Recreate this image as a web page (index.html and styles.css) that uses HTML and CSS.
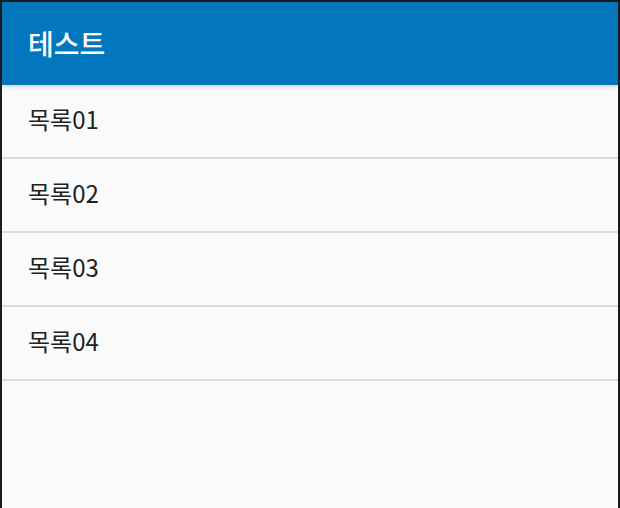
FILE: index.html
```html
<!DOCTYPE html>
<html lang="ko">
<head>
<meta charset="utf-8">
<link rel="stylesheet" href="styles.css">
</head>
<body>
<div class="frame">
  <header class="appbar"><h1 class="title">테스트</h1></header>
  <ul class="list">
    <li class="item">목록01</li>
    <li class="item">목록02</li>
    <li class="item">목록03</li>
    <li class="item">목록04</li>
  </ul>
</div>
</body>
</html>
```
FILE: styles.css
```css
html, body {
  margin: 0;
  padding: 0;
  height: 100%;
}
body {
  background: #1c1c1c;
  font-family: "Noto Sans CJK KR", sans-serif;
}
.frame {
  box-sizing: border-box;
  height: 508px;
  width: 620px;
  padding: 2px 2px 0 2px;
  background: #1c1c1c;
  display: flex;
  flex-direction: column;
}
.appbar {
  box-sizing: border-box;
  height: 83px;
  background: #0277bd;
  display: flex;
  align-items: center;
  padding-left: 26px;
  padding-bottom: 2px;
  position: relative;
  z-index: 1;
  box-shadow: 0 2px 4px rgba(0, 0, 0, 0.14);
  flex: none;
}
.title {
  margin: 0;
  color: #ffffff;
  font-size: 28px;
  line-height: 1;
  font-weight: 500;
  font-family: "Noto Sans CJK KR", sans-serif;
}
.list {
  flex: 1;
  margin: 0;
  padding: 0;
  list-style: none;
  background: #fafafa;
}
.item {
  box-sizing: border-box;
  height: 74px;
  border-bottom: 2px solid #dcdcdc;
  display: flex;
  align-items: center;
  padding-left: 26px;
  padding-bottom: 5px;
  font-size: 24px;
  line-height: 1;
  color: #212121;
}
```
